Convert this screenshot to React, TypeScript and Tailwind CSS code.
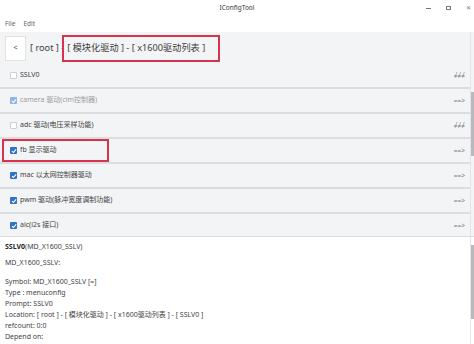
const font = "font-['Noto_Sans','Noto_Sans_CJK_SC',sans-serif]";

interface Item {
  label: string;
  checked: boolean;
  disabled?: boolean;
  mark: string;
  highlight?: boolean;
}

const items: Item[] = [
  { label: "SSLV0", checked: false, mark: "≠≠≠" },
  { label: "camera 驱动(cim控制器)", checked: true, disabled: true, mark: "==>" },
  { label: "adc 驱动(电压采样功能)", checked: false, mark: "≠≠≠" },
  { label: "fb 显示驱动", checked: true, mark: "==>", highlight: true },
  { label: "mac 以太网控制器驱动", checked: true, mark: "==>" },
  { label: "pwm 驱动(脉冲宽度调制功能)", checked: true, mark: "==>" },
  { label: "aic(i2s 接口)", checked: true, mark: "==>" },
];

function Check({ checked, disabled }: { checked: boolean; disabled?: boolean }) {
  if (!checked) {
    return <span className="w-[7px] h-[7px] rounded-[1px] border border-[#cfcfcf] bg-white shrink-0" />;
  }
  return (
    <span
      className={`w-[7px] h-[7px] rounded-[1px] shrink-0 flex items-center justify-center ${
        disabled ? "bg-[#8fb6e3]" : "bg-[#2f72c9]"
      }`}
    >
      <svg width="6" height="6" viewBox="0 0 8 8">
        <path d="M1.3 4.2 L3.2 6 L6.8 1.8" fill="none" stroke="white" strokeWidth="1.5" />
      </svg>
    </span>
  );
}

function Row({ item }: { item: Item }) {
  const body = (
    <div className="flex items-center gap-[3px]">
      <Check checked={item.checked} disabled={item.disabled} />
      <span className={item.disabled ? "text-[#9c9c9c]" : "text-[#3f3f3f]"}>{item.label}</span>
    </div>
  );
  return (
    <div className="h-[25px] shrink-0 flex items-center justify-between border-b-2 border-[#dcdde0] bg-[#f3f4f6] text-[7px]">
      {item.highlight ? (
        <div className="ml-[2px] h-[23px] w-[107px] border-2 border-[#d6334e] flex items-center pl-[6px]">
          {body}
        </div>
      ) : (
        <div className="pl-[10px]">{body}</div>
      )}
      <span className="pr-[5px] text-[6.5px] text-[#777]">{item.mark}</span>
    </div>
  );
}

export default function App() {
  return (
    <div className={`w-[474px] h-[344px] overflow-hidden bg-white flex flex-col ${font}`}>
      {/* title bar */}
      <div className="h-[16px] shrink-0 grid grid-cols-[1fr_auto_1fr] items-center text-[6.5px] text-[#333]">
        <span />
        <span>IConfigTool</span>
        <div className="flex justify-end items-center gap-[15px] pr-[3px]">
          <span className="w-[5px] h-px bg-[#777]" />
          <span className="w-[5px] h-[4px] border border-[#777]" />
          <span className="text-[6px] leading-none text-[#777]">✕</span>
        </div>
      </div>

      {/* menu */}
      <div className="h-[16px] shrink-0 flex items-center gap-[8px] pl-[5px] text-[6.5px] text-[#666]">
        <span>File</span>
        <span>Edit</span>
      </div>

      {/* list area */}
      <div className="flex-1 min-h-0 flex bg-[#f3f4f6]">
        <div className="flex-1 flex flex-col min-w-0 border-r border-[#e4e4e6]">
          <div className="h-[32px] shrink-0 flex items-center pl-[5px] text-[9.2px] text-[#3f3f3f]">
            <span className="w-[21px] h-[25px] bg-white border border-[#e2e2e2] flex items-center justify-center text-[7px] text-[#555]">
              &lt;
            </span>
            <span className="ml-[4px] whitespace-nowrap">[ root ] -</span>
            <span className="-ml-[2px] h-[27px] w-[158px] border-2 border-[#d6334e] flex items-center pl-[3px] whitespace-nowrap">
              [ 模块化驱动 ] - [ x1600驱动列表 ]
            </span>
          </div>
          <div className="flex-1 min-h-0 overflow-hidden flex flex-col">
            {items.map((it) => (
              <Row key={it.label} item={it} />
            ))}
          </div>
        </div>
        <div className="w-[3px] flex flex-col">
          <div className="h-[60px]" />
          <div className="h-[64px] bg-[#b9b9bd]" />
        </div>
      </div>

      {/* info panel */}
      <div className="h-[108px] shrink-0 flex bg-white border-t border-[#dcdde0]">
        <div className="flex-1 pl-[5px] pt-[4px] text-[7px] leading-[11px] text-[#3f3f3f] border-r border-[#e4e4e6]">
          <div>
            <span className="font-bold text-[#222]">SSLV0</span>(MD_X1600_SSLV)
          </div>
          <div className="mt-[5px]">MD_X1600_SSLV:</div>
          <div className="mt-[8px]">Symbol: MD_X1600_SSLV [=]</div>
          <div>Type : menuconfig</div>
          <div>Prompt: SSLV0</div>
          <div>Location: [ root ] - [ 模块化驱动 ] - [ x1600驱动列表 ] - [ SSLV0 ]</div>
          <div>refcount: 0:0</div>
          <div>Depend on:</div>
        </div>
        <div className="w-[3px] flex flex-col">
          <div className="h-[8px]" />
          <div className="h-[74px] bg-[#b9b9bd]" />
        </div>
      </div>
    </div>
  );
}
